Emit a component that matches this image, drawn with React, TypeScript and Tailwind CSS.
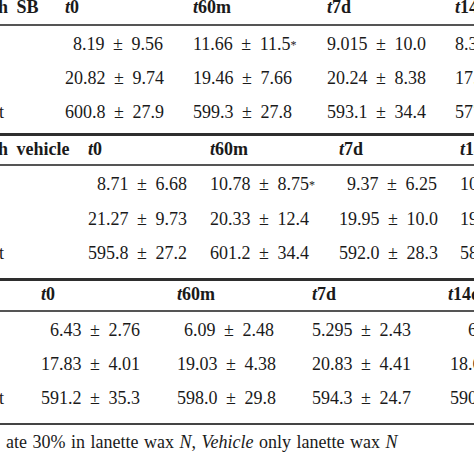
const sections = [
  {
    label: "h SB",
    labelShift: "-ml-[2px]",
    grid: "grid-cols-[65px_128px_134px_128px_140px]",
    heads: ["0", "60m", "7d", "14d"],
    align: ["text-right pr-[30px]", "text-left", "text-left", "text-left"],
    rows: [
      ["8.19 ± 9.56", "11.66 ± 11.5*", "9.015 ± 10.0", "8.37 ± 7.12"],
      ["20.82 ± 9.74", "19.46 ± 7.66", "20.24 ± 8.38", "17.92 ± 8.04"],
      ["600.8 ± 27.9", "599.3 ± 27.8", "593.1 ± 34.4", "577.4 ± 30.1"],
    ],
  },
  {
    label: "h vehicle",
    labelShift: "-ml-[2px]",
    grid: "grid-cols-[88px_122px_129px_121px_140px]",
    heads: ["0", "60m", "7d", "14d"],
    align: ["text-right pr-[23px]", "text-left", "text-right pr-[23px]", "text-left"],
    rows: [
      ["8.71 ± 6.68", "10.78 ± 8.75*", "9.37 ± 6.25", "10.12 ± 7.31"],
      ["21.27 ± 9.73", "20.33 ± 12.4", "19.95 ± 10.0", "19.44 ± 9.02"],
      ["595.8 ± 27.2", "601.2 ± 34.4", "592.0 ± 28.3", "585.6 ± 31.7"],
    ],
  },
  {
    label: "",
    labelShift: "",
    grid: "grid-cols-[41px_136px_135px_136px_140px]",
    heads: ["0", "60m", "7d", "14d"],
    align: ["text-right pr-[37px]", "text-right pr-[38px]", "text-right pr-[38px]", "text-right pr-[39px]"],
    rows: [
      ["6.43 ± 2.76", "6.09 ± 2.48", "5.295 ± 2.43", "6.57 ± 2.6"],
      ["17.83 ± 4.01", "19.03 ± 4.38", "20.83 ± 4.41", "18.63 ± 4.22"],
      ["591.2 ± 35.3", "598.0 ± 29.8", "594.3 ± 24.7", "590.5 ± 27.6"],
    ],
  },
];

// header box heights / row pitch / gap before the closing rule, per section
const layout = [
  { head: "h-[24px] leading-[14px]", row: "h-[34px]", after: "h-[4px]" },
  { head: "h-[28px] leading-[26px]", row: "h-[34.5px]", after: "h-[7.5px]" },
  { head: "h-[29px] leading-[26px]", row: "h-[34px]", after: "h-[8px]" },
];

function Value({ text }: { text: string }) {
  if (text.endsWith("*")) {
    return (
      <>
        {text.slice(0, -1)}
        <sup className="text-[12px] relative -top-[1px]">*</sup>
      </>
    );
  }
  return <>{text}</>;
}

export default function App() {
  return (
    <div className="w-[474px] h-[474px] overflow-hidden bg-white text-[#1a1a1a] [font-family:'Liberation_Serif',serif] text-[18px] [word-spacing:4px]">
      {sections.map((s, si) => (
        <div key={si}>
          {/* header */}
          <div className={`grid ${s.grid} ${layout[si].head} font-bold whitespace-nowrap`}>
            <div className={s.labelShift}>{s.label}</div>
            {s.heads.map((h, i) => (
              <div key={i}>
                <span className="italic">t</span>
                {h}
              </div>
            ))}
          </div>
          <div className="h-[2px] bg-[#555]" />
          <div className="h-[1px]" />

          {/* rows */}
          {s.rows.map((r, ri) => (
            <div key={ri} className={`grid ${s.grid} ${layout[si].row} leading-[34px] whitespace-nowrap`}>
              <div className="-ml-[1px]">{ri === 2 ? "t" : ""}</div>
              {r.map((v, ci) => (
                <div key={ci} className={s.align[ci]}>
                  <Value text={v} />
                </div>
              ))}
            </div>
          ))}
          <div className={layout[si].after} />
          {si < 2 ? <div className="h-[3px] bg-[#2e2e2e]" /> : <div className="h-[2px] bg-[#444]" />}
        </div>
      ))}

      {/* footnote */}
      <p className="leading-[34px] whitespace-nowrap ml-[6px] [word-spacing:1px]">
        ate 30% in lanette wax <span className="italic">N</span>, <span className="italic">Vehicle</span> only lanette wax{" "}
        <span className="italic">N</span>
      </p>
    </div>
  );
}
